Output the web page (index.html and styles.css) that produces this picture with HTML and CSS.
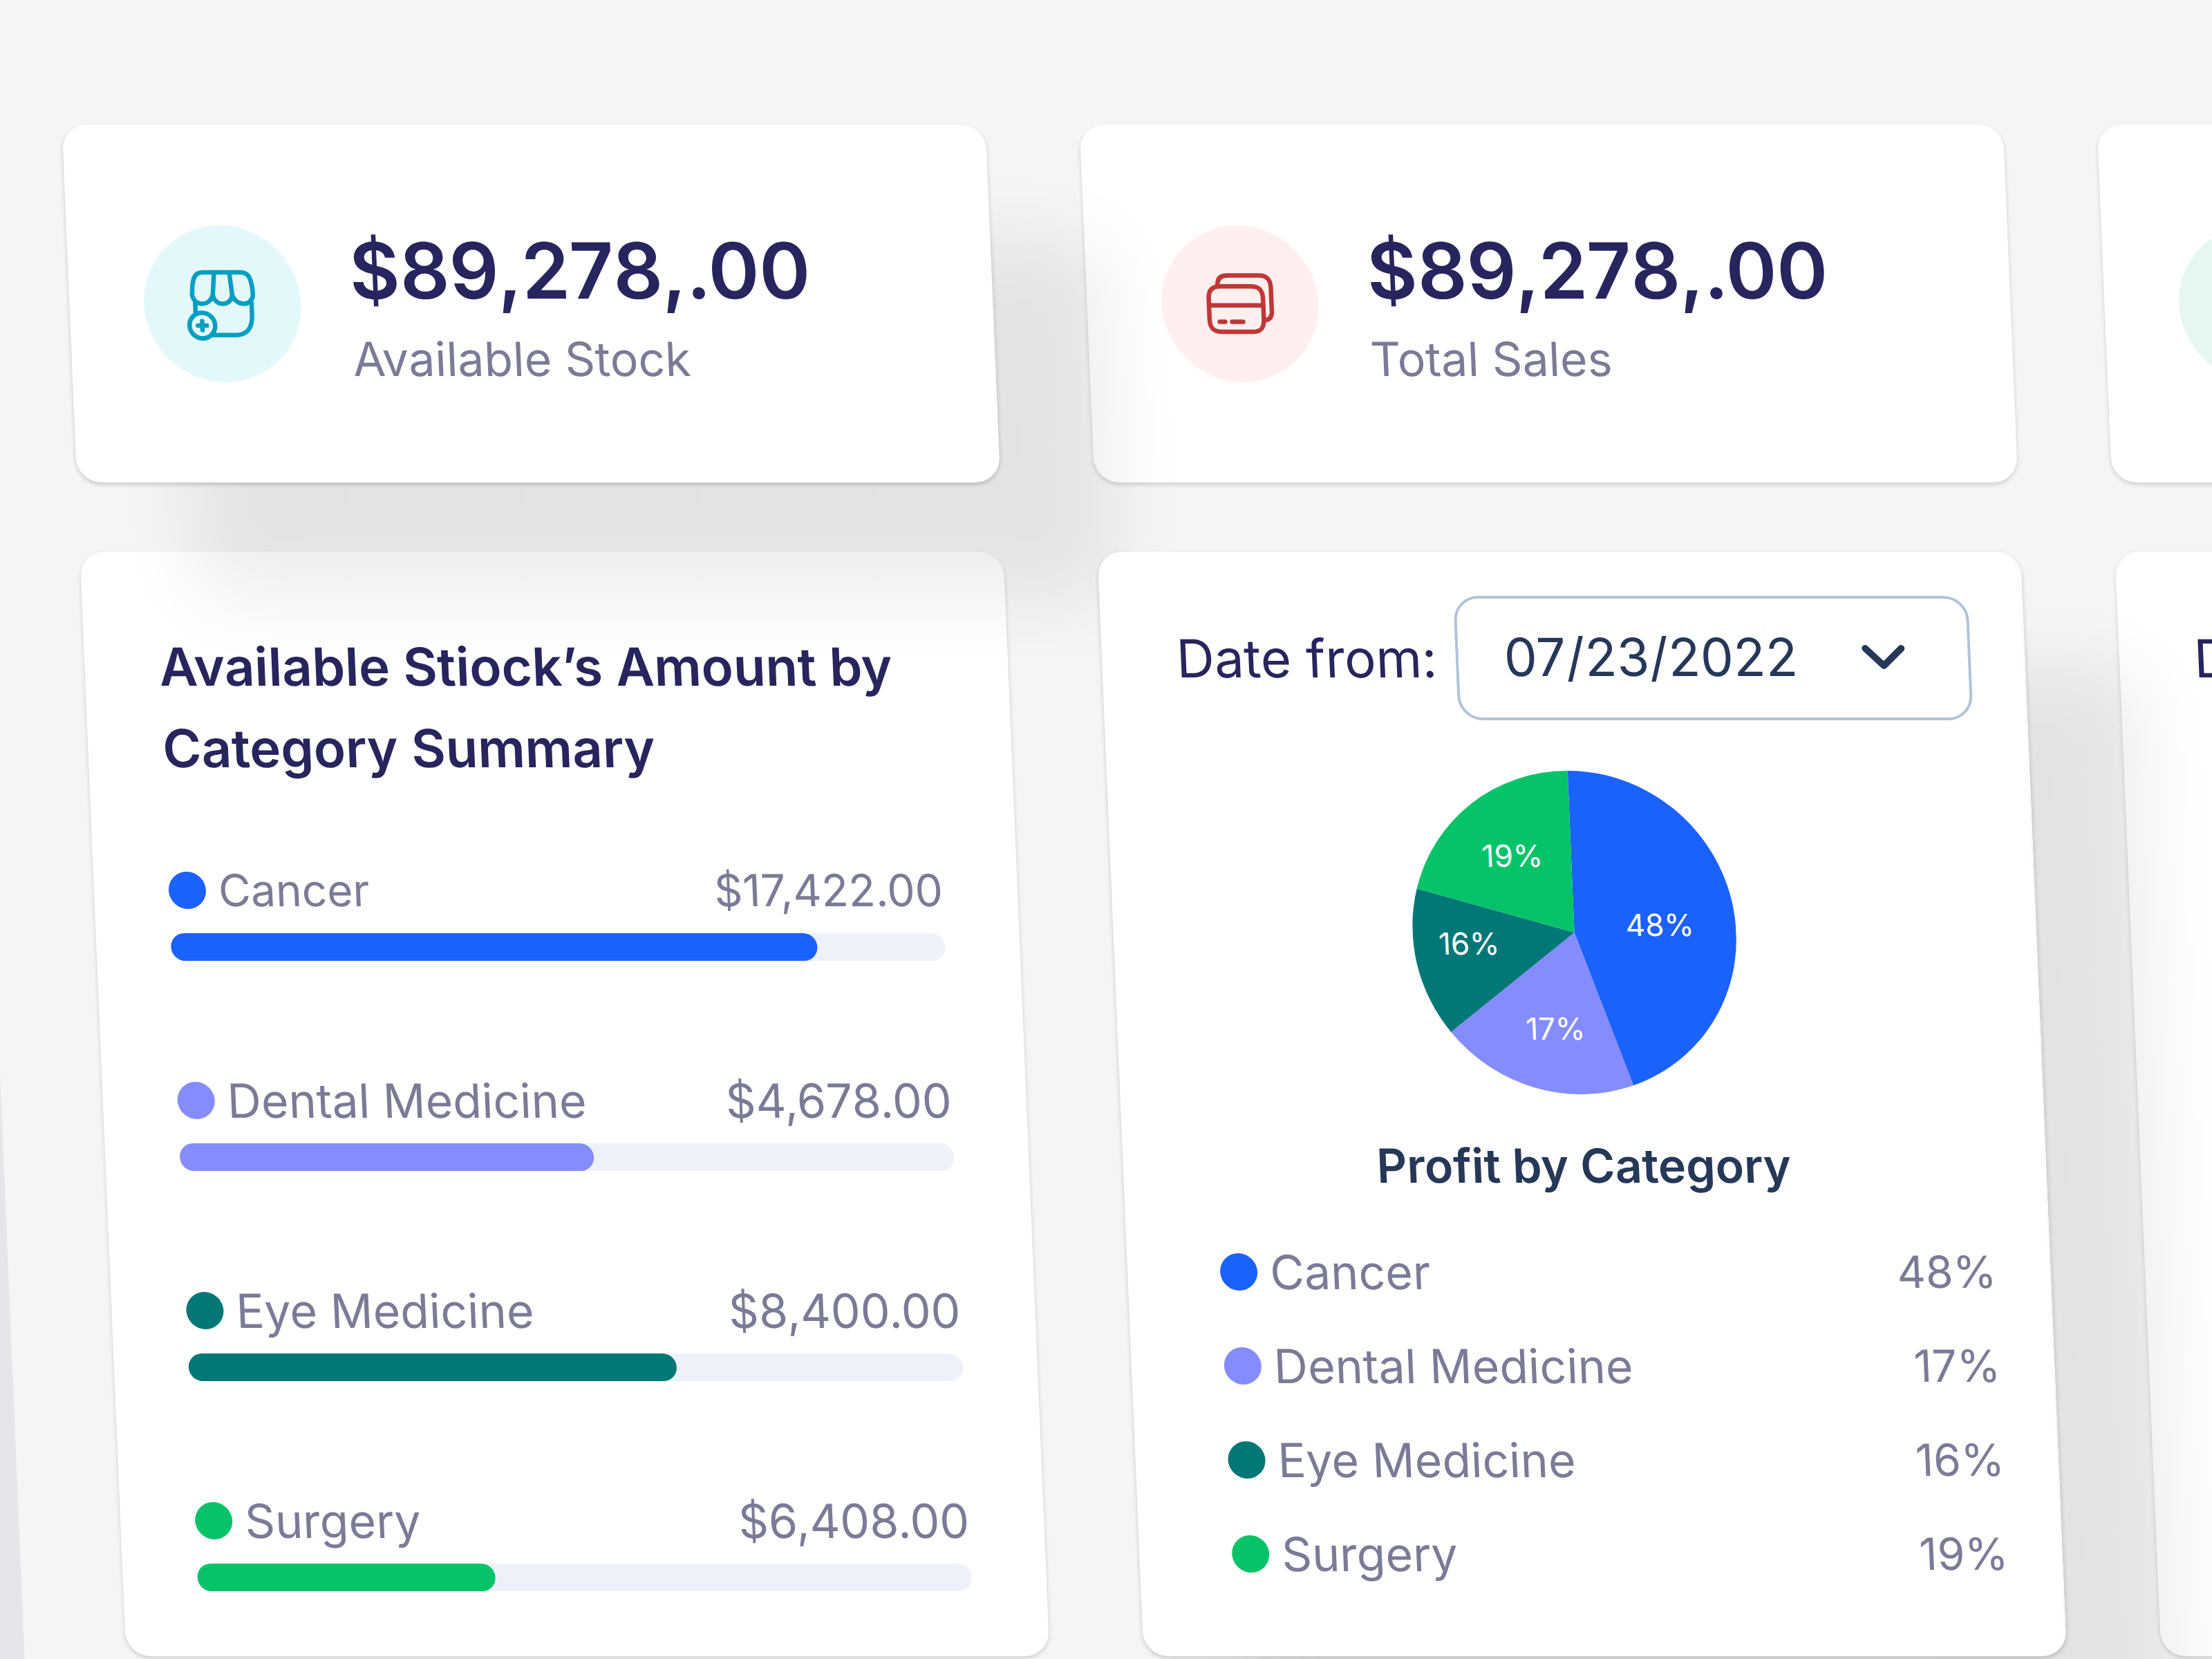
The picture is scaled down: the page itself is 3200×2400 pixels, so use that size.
FILE: index.html
```
<!DOCTYPE html>
<html lang="en">
<head>
<meta charset="utf-8">
<meta name="viewport" content="width=device-width, initial-scale=1">
<title>Pharmacy dashboard</title>
<link rel="stylesheet" href="styles.css">
</head>
<body>
<div class="board">
  <div class="sidebar" aria-hidden="true"></div>
  <main class="grid">

    <article class="card card--raised stat">
      <span class="stat__icon stat__icon--cyan">
        <svg class="icon" viewBox="0 0 120 120" aria-hidden="true">
          <path d="M33 15H87C98 15 101 22 103 34L104 46C104 54 98 60.500 90 60.500C82 60.500 75 54 74 47C74 54 68 60.500 60 60.500C52 60.500 46 54 46 47C45 54 38 60.500 30 60.500C22 60.500 16 54 16 46L17 34C19 22 22 15 33 15Z"/>
          <path d="M49 15L46 47M71 15L74 47M20 58V74M101.500 58V76C101.500 98 92 105.700 76 105.700H44"/>
          <circle cx="29" cy="92" r="18.500"/>
          <path d="M29 85.500V98.500M22.500 92H35.500"/>
        </svg>
      </span>
      <div class="stat__text">
        <p class="stat__value">$89,278,.00</p>
        <p class="stat__label">Available Stock</p>
      </div>
    </article>

    <article class="card stat">
      <span class="stat__icon stat__icon--red">
        <svg class="icon" viewBox="0 0 120 120" aria-hidden="true">
          <path d="M28 34C28 24 33 19.600 42 19.600H89C99 19.600 105 25 105 37V72C105 80 101 84 94 84"/>
          <path d="M32 35.300H76C88 35.300 93 41 93 53V83C93 96 88 101 76 101H32C20 101 14.500 96 14.500 83V53C14.500 41 20 35.300 32 35.300Z"/>
          <path d="M15 62.800H93M29 86.600H37M47 86.600H63"/>
        </svg>
      </span>
      <div class="stat__text">
        <p class="stat__value">$89,278,.00</p>
        <p class="stat__label">Total Sales</p>
      </div>
    </article>

    <article class="card stat">
      <span class="stat__icon stat__icon--green"></span>
    </article>

    <section class="card stock">
      <h2 class="stock__title">Available Stiock’s Amount by Category Summary</h2>
      <ul class="bars">
        <li class="bar">
          <div class="entry"><span class="dot dot--blue"></span><span>Cancer</span><span class="entry__value">$17,422.00</span></div>
          <div class="track"><div class="fill fill--blue" style="width:83.5%"></div></div>
        </li>
        <li class="bar">
          <div class="entry"><span class="dot dot--violet"></span><span>Dental Medicine</span><span class="entry__value">$4,678.00</span></div>
          <div class="track"><div class="fill fill--violet" style="width:53.5%"></div></div>
        </li>
        <li class="bar">
          <div class="entry"><span class="dot dot--teal"></span><span>Eye Medicine</span><span class="entry__value">$8,400.00</span></div>
          <div class="track"><div class="fill fill--teal" style="width:63%"></div></div>
        </li>
        <li class="bar">
          <div class="entry"><span class="dot dot--green"></span><span>Surgery</span><span class="entry__value">$6,408.00</span></div>
          <div class="track"><div class="fill fill--green" style="width:38.5%"></div></div>
        </li>
      </ul>
    </section>

    <section class="card card--raised card--edge profit">
      <div class="date">
        <label class="date__label" for="date-from">Date from:</label>
        <div class="date__box">
          <select class="date__select" id="date-from"><option>07/23/2022</option></select>
          <svg class="date__chevron" viewBox="0 0 64 40" aria-hidden="true"><path d="M6 6L32 31L58 6"/></svg>
        </div>
      </div>
      <svg class="pie" viewBox="0 0 468 468" role="img" aria-label="Profit by category">
        <path class="slice--blue" d="M234 234V0A234 234 0 0 1 310.200 455.300Z"/>
        <path class="slice--violet" d="M234 234L310.200 455.300A234 234 0 0 1 49.600 378.100Z"/>
        <path class="slice--teal" d="M234 234L49.600 378.100A234 234 0 0 1 8.800 170.500Z"/>
        <path class="slice--green" d="M234 234L8.800 170.500A234 234 0 0 1 234 0Z"/>
        <text x="358" y="239">48%</text>
        <text x="149" y="139">19%</text>
        <text x="81" y="266">16%</text>
        <text x="201" y="389">17%</text>
      </svg>
      <h2 class="profit__title">Profit by Category</h2>
      <ul class="legend">
        <li class="entry"><span class="dot dot--blue"></span><span>Cancer</span><span class="entry__value">48%</span></li>
        <li class="entry"><span class="dot dot--violet"></span><span>Dental Medicine</span><span class="entry__value">17%</span></li>
        <li class="entry"><span class="dot dot--teal"></span><span>Eye Medicine</span><span class="entry__value">16%</span></li>
        <li class="entry"><span class="dot dot--green"></span><span>Surgery</span><span class="entry__value">19%</span></li>
      </ul>
    </section>

    <section class="card profit">
      <div class="date">
        <span class="date__label">Date from:</span>
      </div>
    </section>

  </main>
</div>
</body>
</html>
```
FILE: styles.css
```
:root {
  --navy: #26255e;
  --ink: #253858;
  --muted: #7a7b96;
  --blue: #1b61fb;
  --violet: #858cff;
  --teal: #027777;
  --green: #06c369;
}

* { box-sizing: border-box; }

body {
  margin: 0;
  min-height: 100vh;
  overflow: hidden;
  background: #f5f5f5;
  color: var(--navy);
  font-family: Inter, "Liberation Sans", sans-serif;
}

h2, p, ul { margin: 0; padding: 0; }
ul { list-style: none; }

/* The whole board leans to the right as it goes down */
.board {
  display: flex;
  min-height: 100vh;
  margin-left: -365px;
  transform: skewX(2.4deg);
  transform-origin: 0 0;
}

.sidebar {
  flex: 0 0 300px;
  background: #e4e6eb;
}

.grid {
  flex: 1;
  display: grid;
  grid-template-columns: repeat(3, 41.75vw);
  align-content: start;
  gap: 100px 136px;
  padding: 180px 0 4px 147px;
}

.card {
  position: relative;
  background: #fff;
  border-radius: 36px;
  box-shadow: 0 3px 6px rgba(0, 0, 0, .16);
}

.card--raised {
  z-index: 1;
  box-shadow: 0 3px 6px rgba(20, 20, 50, .2), 164px 168px 110px rgba(0, 0, 0, .07);
}

.card--edge {
  border-right: 3px solid #fafafa;
}

/* Stat cards */
.stat {
  display: flex;
  align-items: center;
  gap: 72px;
  padding: 131px 108px;
}

.stat__icon {
  flex: none;
  display: grid;
  place-items: center;
  width: 227px;
  height: 227px;
  border-radius: 50%;
}
.stat__icon--cyan { background: #e4f8fc; color: #009fc1; }
.stat__icon--red { background: #ffefef; color: #bf3737; }
.stat__icon--green { background: #e6f7ef; }

.icon {
  width: 120px;
  height: 120px;
  fill: none;
  stroke: currentColor;
  stroke-width: 6.5;
  stroke-linecap: round;
  stroke-linejoin: round;
}

.stat__value {
  font-size: 112px;
  font-weight: 600;
  line-height: 160px;
}

.stat__label {
  color: var(--muted);
  font-size: 68px;
  line-height: 96px;
}

/* Dot, name and value on one line */
.entry {
  display: flex;
  align-items: center;
  gap: 18px;
  color: var(--muted);
  font-size: 68px;
  line-height: 80px;
  white-space: nowrap;
}
.entry__value { margin-left: auto; }

.dot {
  flex: none;
  width: 54px;
  height: 54px;
  border-radius: 50%;
}
.dot--blue, .fill--blue { background: var(--blue); }
.dot--violet, .fill--violet { background: var(--violet); }
.dot--teal, .fill--teal { background: var(--teal); }
.dot--green, .fill--green { background: var(--green); }

/* Stock summary */
.stock { padding: 107px 108px 94px; }

.stock__title {
  margin-bottom: 107px;
  font-size: 76px;
  font-weight: 600;
  line-height: 118px;
}

.bars {
  display: grid;
  gap: 162px;
}

.bar {
  display: grid;
  gap: 22px;
}
.bar:first-child .entry { font-size: 64px; }

.track {
  height: 40px;
  border-radius: 20px;
  background: #edf2fa;
}
.fill {
  height: 100%;
  border-radius: 20px;
}

/* Profit by category */
.profit {
  display: flex;
  flex-direction: column;
  align-items: center;
  padding: 64px 108px 94px;
}

/* The date row and the legend run closer to the right edge */
.date,
.legend {
  align-self: stretch;
  margin-right: -32px;
}

.date {
  display: flex;
  align-items: center;
  justify-content: space-between;
  min-height: 180px;
}

.date__label {
  font-size: 76px;
  line-height: 96px;
  white-space: nowrap;
}

.date__box {
  position: relative;
  width: 745px;
}

.date__select {
  display: block;
  width: 100%;
  height: 180px;
  padding: 0 66px 4px;
  appearance: none;
  border: 4px solid #b2c3d6;
  border-radius: 36px;
  background: #fff;
  color: var(--ink);
  font: inherit;
  font-size: 76px;
}

.date__chevron {
  position: absolute;
  top: 70px;
  right: 94px;
  width: 64px;
  height: 40px;
  fill: none;
  stroke: var(--ink);
  stroke-width: 10;
  stroke-linecap: round;
  stroke-linejoin: round;
  pointer-events: none;
}

.pie {
  width: 468px;
  height: 468px;
  margin: 73px 0 63px;
}
.pie text {
  fill: #fff;
  font-size: 44px;
  text-anchor: middle;
}
.slice--blue { fill: var(--blue); }
.slice--violet { fill: var(--violet); }
.slice--teal { fill: var(--teal); }
.slice--green { fill: var(--green); }

.profit__title {
  margin-bottom: 74px;
  color: var(--ink);
  font-size: 68px;
  font-weight: 600;
  line-height: 80px;
}

.legend {
  display: grid;
  gap: 56px;
  padding-left: 26px;
}
.legend .entry__value { font-size: 64px; }
```
